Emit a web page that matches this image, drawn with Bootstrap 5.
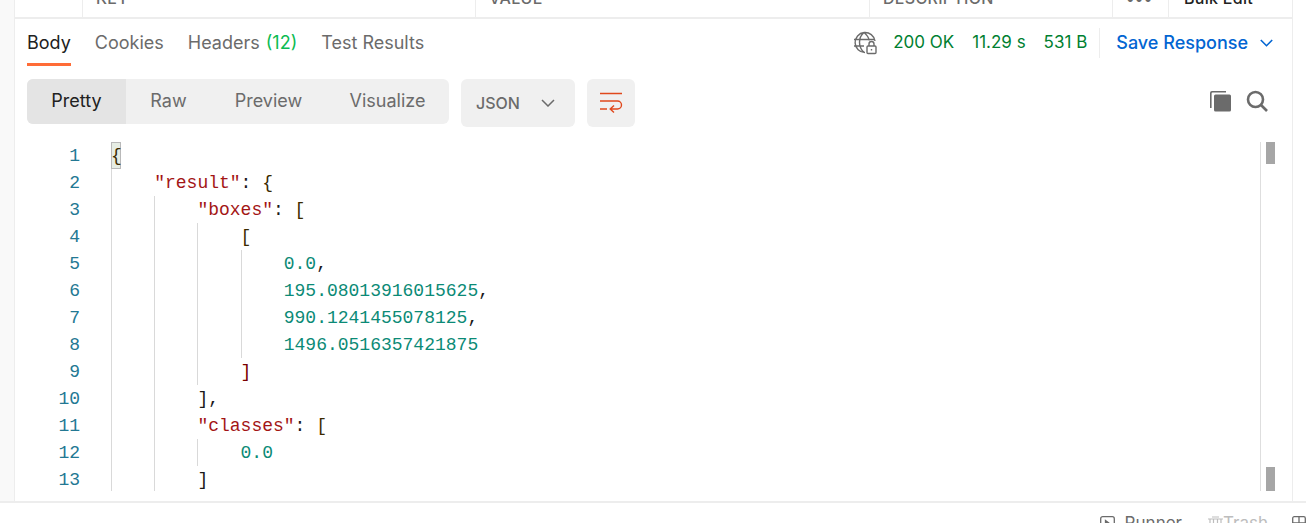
<!doctype html>
<html lang="en"><head><meta charset="utf-8"><title>Response</title>
<link href="https://cdn.jsdelivr.net/npm/bootstrap@5.3.0/dist/css/bootstrap.min.css" rel="stylesheet">
<style>
html,body{height:523px;overflow:hidden;background:#fff}
body{font-family:Inter,"Liberation Sans",sans-serif;font-size:18px;color:#212121}
.shell{height:503px;border-bottom:2px solid #ededed}
.side-l{width:15px;background:#f9f9f9;border-right:1px solid #ededed}
.side-r{width:14px;border-left:1px solid #ededed}
.work{min-width:0}
.strip{height:19px;border-bottom:2px solid #ededed;overflow:hidden;font-size:16px;font-weight:500;color:#6b6b6b;letter-spacing:.3px}
.strip>div{height:17px;border-right:1px solid #ededed;padding-left:13px;line-height:17px;overflow:hidden}
.strip span{display:block;margin-top:-10px}
.c0{width:68px;padding-left:0!important}.c1{width:393px}.c2{width:394px}.c3{width:243px}.c4{width:56px}.c5{flex:1;border-right:0!important;padding-left:15px!important;color:#212121}
.tabsrow{height:47px;padding:0 19px 0 12px}
.tabx{height:47px;line-height:48px;color:#6b6b6b;margin-right:24px;border-bottom:3px solid transparent}
.tabx.on{color:#212121;border-bottom-color:#ff6c37;height:47px}
.cnt{color:#0cbb52;margin-left:1px}
.globe{margin-right:-2px}
.stat{color:#007f31;margin-left:18px;font-size:17px}
.vdiv{width:1px;height:30px;background:#ededed;margin:0 16px 0 12px}
.save{color:#0265d2;font-weight:500}
.chev{margin-left:12px}
.toolrow{padding:13px 0 0 12px;height:76px}
.seg{height:45px;width:422px;background:#f0f0f0;border-radius:6px;overflow:hidden;color:#6b6b6b}
.seg>div{line-height:44px;text-align:center}
.seg .act{width:99px;background:#e4e4e4;color:#212121}
.s2{width:85px}.s3{width:115px}.s4{width:123px}
.fmt{height:48px;background:#f0f0f0;border-radius:6px;margin-left:12px;color:#6b6b6b}
.fmt.js{width:114px;font-size:16px;font-weight:500;padding-left:15px}
.fmt.js svg{margin-right:20px}
.fmt.wr{width:48px}
.tools{margin-left:auto;padding-right:24px;height:44px;gap:15px}
.editor{height:349px;overflow:hidden;font-family:"Liberation Mono",monospace;font-size:18px;line-height:27px;padding-left:12px}
.gut{width:53px;text-align:right;color:#237893}
.code{margin-left:31px;width:1149px}
.ln{height:27px;line-height:29px;white-space:pre}
.ig{display:inline-block;width:43.2px;height:27px;border-left:1.5px solid #d9d9d9;vertical-align:top}
.k{color:#a31515}.n{color:#0b8a76}.p{color:#1a1a1a}.b{color:#3b2a00}.br{color:#7a0000}
.mt{display:inline-block;width:9.6px;height:27px;background:#e6ede4;border:1px solid #b9b9b9;line-height:27px;color:#3b2a00;vertical-align:top;text-indent:-1px}
.sb{width:16px;border-left:1px solid #dedede;padding-left:5px}
.th{width:9px;background:#a6a6a6}
.foot{height:20px;overflow:hidden;font-size:17px;color:#6b6b6b;padding-top:9px;line-height:22px}
.foot svg{flex:none;margin-top:4px}
.run-i{margin-right:10px}
.tr-i{margin-left:26px}
.dim{color:#bdbdbd}
.tr{margin-right:24px}
</style></head><body>
<div class="shell d-flex">
  <div class="side-l flex-shrink-0"></div>
  <div class="work flex-grow-1 d-flex flex-column">
    <div class="strip d-flex">
      <div class="c0"></div><div class="c1"><span>KEY</span></div><div class="c2"><span>VALUE</span></div><div class="c3"><span>DESCRIPTION</span></div><div class="c4"><span>•••</span></div><div class="c5"><span>Bulk Edit</span></div>
    </div>
    <div class="tabsrow d-flex align-items-center">
      <div class="tabx on">Body</div><div class="tabx">Cookies</div><div class="tabx">Headers <span class="cnt">(12)</span></div><div class="tabx">Test Results</div>
      <svg class="ms-auto globe" width="25" height="24" viewBox="0 0 25 24" fill="none" stroke="#6b6b6b" stroke-width="1.4"><path d="M13 21.5a10 10 0 1 1 10-11.5M2 8.5h20M2 15h10M12 1.5c-6 5-6 14 0 20M12 1.5c3.5 3 5 6 5.2 8"/><rect x="15" y="15" width="9" height="7.5" rx="1" fill="#fff"/><path d="M17 15v-2a2.5 2.5 0 0 1 5 0v2M19.500 18v1.500"/></svg>
      <div class="stat">200 OK</div><div class="stat">11.29 s</div><div class="stat">531 B</div><div class="vdiv"></div>
      <div class="save">Save Response</div>
      <svg class="chev" width="13" height="8" viewBox="0 0 13 8" fill="none" stroke="#0265d2" stroke-width="1.600"><path d="M.8 1l5.700 5.700L12.200 1"/></svg>
    </div>
    <div class="toolrow d-flex">
      <div class="seg d-flex"><div class="act">Pretty</div><div class="s2">Raw</div><div class="s3">Preview</div><div class="s4">Visualize</div></div>
      <div class="fmt js d-flex align-items-center">JSON<svg class="ms-auto" width="14" height="8" viewBox="0 0 14 8" fill="none" stroke="#6b6b6b" stroke-width="1.500"><path d="M1 1l6 6 6-6"/></svg></div>
      <div class="fmt wr d-flex align-items-center justify-content-center"><svg width="24" height="22" viewBox="0 0 24 22" fill="none" stroke="#e0481c" stroke-width="1.400"><path d="M1 1.500h22M1 9h17.500a4 4 0 0 1 0 8h-7M15 13.500l-3.800 3.500 3.800 3.500M1 17h7"/></svg></div>
      <div class="tools d-flex align-items-center">
        <svg width="22" height="22" viewBox="0 0 22 22" fill="#6b6b6b"><path d="M1 18V3a2 2 0 0 1 2-2h14v1.600H3.500a.9.9 0 0 0-.9.900V18z"/><rect x="5" y="4.500" width="17" height="17" rx="1.500"/></svg>
        <svg width="22" height="22" viewBox="0 0 22 22" fill="none" stroke="#6b6b6b" stroke-width="2.600"><circle cx="9.500" cy="9.500" r="7.500"/><path d="M15 15l6 6"/></svg>
      </div>
    </div>
    <div class="editor d-flex">
      <div class="gut"><div class="ln">1</div><div class="ln">2</div><div class="ln">3</div><div class="ln">4</div><div class="ln">5</div><div class="ln">6</div><div class="ln">7</div><div class="ln">8</div><div class="ln">9</div><div class="ln">10</div><div class="ln">11</div><div class="ln">12</div><div class="ln">13</div></div>
      <div class="code">
<div class="ln"><span class="mt">{</span></div>
<div class="ln"><span class="ig"></span><span class="k">"result"</span><span class="p">: </span><span class="b">{</span></div>
<div class="ln"><span class="ig"></span><span class="ig"></span><span class="k">"boxes"</span><span class="p">: </span><span class="b">[</span></div>
<div class="ln"><span class="ig"></span><span class="ig"></span><span class="ig"></span><span class="b">[</span></div>
<div class="ln"><span class="ig"></span><span class="ig"></span><span class="ig"></span><span class="ig"></span><span class="n">0.0</span><span class="p">,</span></div>
<div class="ln"><span class="ig"></span><span class="ig"></span><span class="ig"></span><span class="ig"></span><span class="n">195.08013916015625</span><span class="p">,</span></div>
<div class="ln"><span class="ig"></span><span class="ig"></span><span class="ig"></span><span class="ig"></span><span class="n">990.1241455078125</span><span class="p">,</span></div>
<div class="ln"><span class="ig"></span><span class="ig"></span><span class="ig"></span><span class="ig"></span><span class="n">1496.0516357421875</span></div>
<div class="ln"><span class="ig"></span><span class="ig"></span><span class="ig"></span><span class="br">]</span></div>
<div class="ln"><span class="ig"></span><span class="ig"></span><span class="p">],</span></div>
<div class="ln"><span class="ig"></span><span class="ig"></span><span class="k">"classes"</span><span class="p">: </span><span class="b">[</span></div>
<div class="ln"><span class="ig"></span><span class="ig"></span><span class="ig"></span><span class="n">0.0</span></div>
<div class="ln"><span class="ig"></span><span class="ig"></span><span class="p">]</span></div>
      </div>
      <div class="sb d-flex flex-column justify-content-between"><div class="th" style="height:22px"></div><div class="th" style="height:24px"></div></div>
    </div>
  </div>
  <div class="side-r flex-shrink-0"></div>
</div>
<div class="foot d-flex justify-content-end align-items-start">
  <svg class="run-i" width="15" height="15" viewBox="0 0 15 15" fill="none" stroke="#6b6b6b" stroke-width="1.300"><rect x=".7" y=".7" width="13.600" height="13.600" rx="2"/><path d="M5.500 4.500l4 3-4 3z" fill="#6b6b6b"/></svg>
  <span>Runner</span>
  <svg class="tr-i" width="15" height="15" viewBox="0 0 15 15" fill="none" stroke="#bdbdbd" stroke-width="1.200"><path d="M0 3h15M4 1h7M2 3v12M5.500 3v12M9.500 3v12M13 3v12"/></svg>
  <span class="dim tr">Trash</span>
  <svg width="14" height="15" viewBox="0 0 14 15" fill="none" stroke="#6b6b6b" stroke-width="1.300"><rect x=".7" y=".7" width="12.600" height="13.600" rx="1.500"/><path d="M.7 7h12.600M7 .7V7"/><rect x="2.500" y="9" width="3" height="3" fill="#6b6b6b"/></svg>
</div>
</body></html>
